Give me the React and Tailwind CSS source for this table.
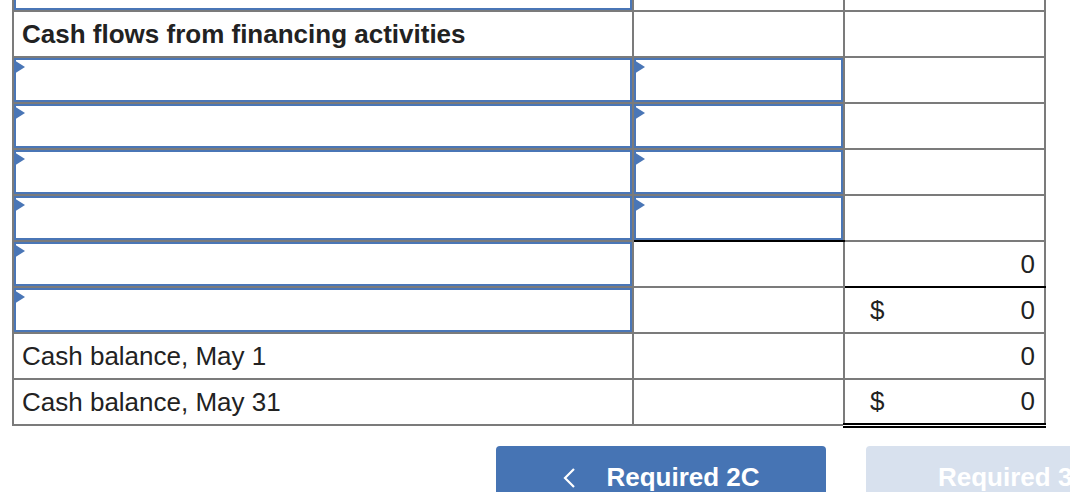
import React from "react";

const grid = "border-2 border-[#7b7b7b]";

function Flag() {
  return (
    <span className="absolute left-0 top-[2px] w-0 h-0 border-y-[7px] border-y-transparent border-l-[11px] border-l-[#4a76b6]" />
  );
}

function InputCell({ flag = true, extra = "" }) {
  return (
    <td className={`${grid} ${extra} p-0 relative`}>
      <div className="h-[44px] border-2 border-[#4a76b6] bg-white" />
      {flag && <Flag />}
    </td>
  );
}

function TextCell({ children, bold, extra = "" }) {
  return (
    <td className={`${grid} ${extra} px-2 text-[#222] whitespace-nowrap ${bold ? "font-bold" : ""}`}>
      {children}
    </td>
  );
}

function Amount({ dollar, value = "0", extra = "" }) {
  return (
    <td className={`${grid} ${extra} p-0 text-[#222]`}>
      <div className="flex items-center justify-between pl-[25px] pr-[9px]">
        <span>{dollar ? "$" : ""}</span>
        <span>{value}</span>
      </div>
    </td>
  );
}

export default function App() {
  return (
    <div
      className="w-[1070px] h-[492px] overflow-hidden bg-white"
      style={{ fontFamily: '"Liberation Sans", Arial, sans-serif' }}
    >
      <table className="ml-[12px] mt-[-36px] border-collapse table-fixed text-[26px] leading-none">
        <colgroup>
          <col className="w-[620px]" />
          <col className="w-[211px]" />
          <col className="w-[201px]" />
        </colgroup>
        <tbody>
          <tr className="h-[46px]">
            <InputCell flag={false} />
            <TextCell />
            <TextCell />
          </tr>
          <tr className="h-[46px]">
            <TextCell bold>Cash flows from financing activities</TextCell>
            <TextCell />
            <TextCell />
          </tr>
          {[0, 1, 2, 3].map((i) => (
            <tr key={i} className="h-[46px]">
              <InputCell />
              <InputCell extra={i === 3 ? "border-b-black" : ""} />
              <TextCell />
            </tr>
          ))}
          <tr className="h-[46px]">
            <InputCell />
            <TextCell />
            <Amount extra="border-b-black" />
          </tr>
          <tr className="h-[46px]">
            <InputCell />
            <TextCell />
            <Amount dollar />
          </tr>
          <tr className="h-[46px]">
            <TextCell>Cash balance, May 1</TextCell>
            <TextCell />
            <Amount extra="border-b-black" />
          </tr>
          <tr className="h-[46px]">
            <TextCell>Cash balance, May 31</TextCell>
            <TextCell />
            <Amount dollar extra="border-b-[5px] border-b-black border-double" />
          </tr>
        </tbody>
      </table>

      <div className="flex gap-[40px] ml-[496px] mt-[18px]">
        <button className="w-[330px] h-[64px] shrink-0 rounded-t-[4px] bg-[#4674b4] text-white font-bold text-[26px] flex items-center justify-center gap-[30px]">
          <svg width="14" height="22" viewBox="0 0 14 22" fill="none" stroke="white" strokeWidth="2.2">
            <path d="M12 2 L3 11 L12 20" />
          </svg>
          <span>Required 2C</span>
        </button>
        <button className="w-[330px] h-[64px] shrink-0 rounded-t-[4px] bg-[#d8e1ee] text-white font-bold text-[26px] flex items-center justify-start pl-[72px] gap-[30px]">
          <span>Required 3</span>
          <svg width="14" height="22" viewBox="0 0 14 22" fill="none" stroke="white" strokeWidth="2.2">
            <path d="M2 2 L11 11 L2 20" />
          </svg>
        </button>
      </div>
    </div>
  );
}
